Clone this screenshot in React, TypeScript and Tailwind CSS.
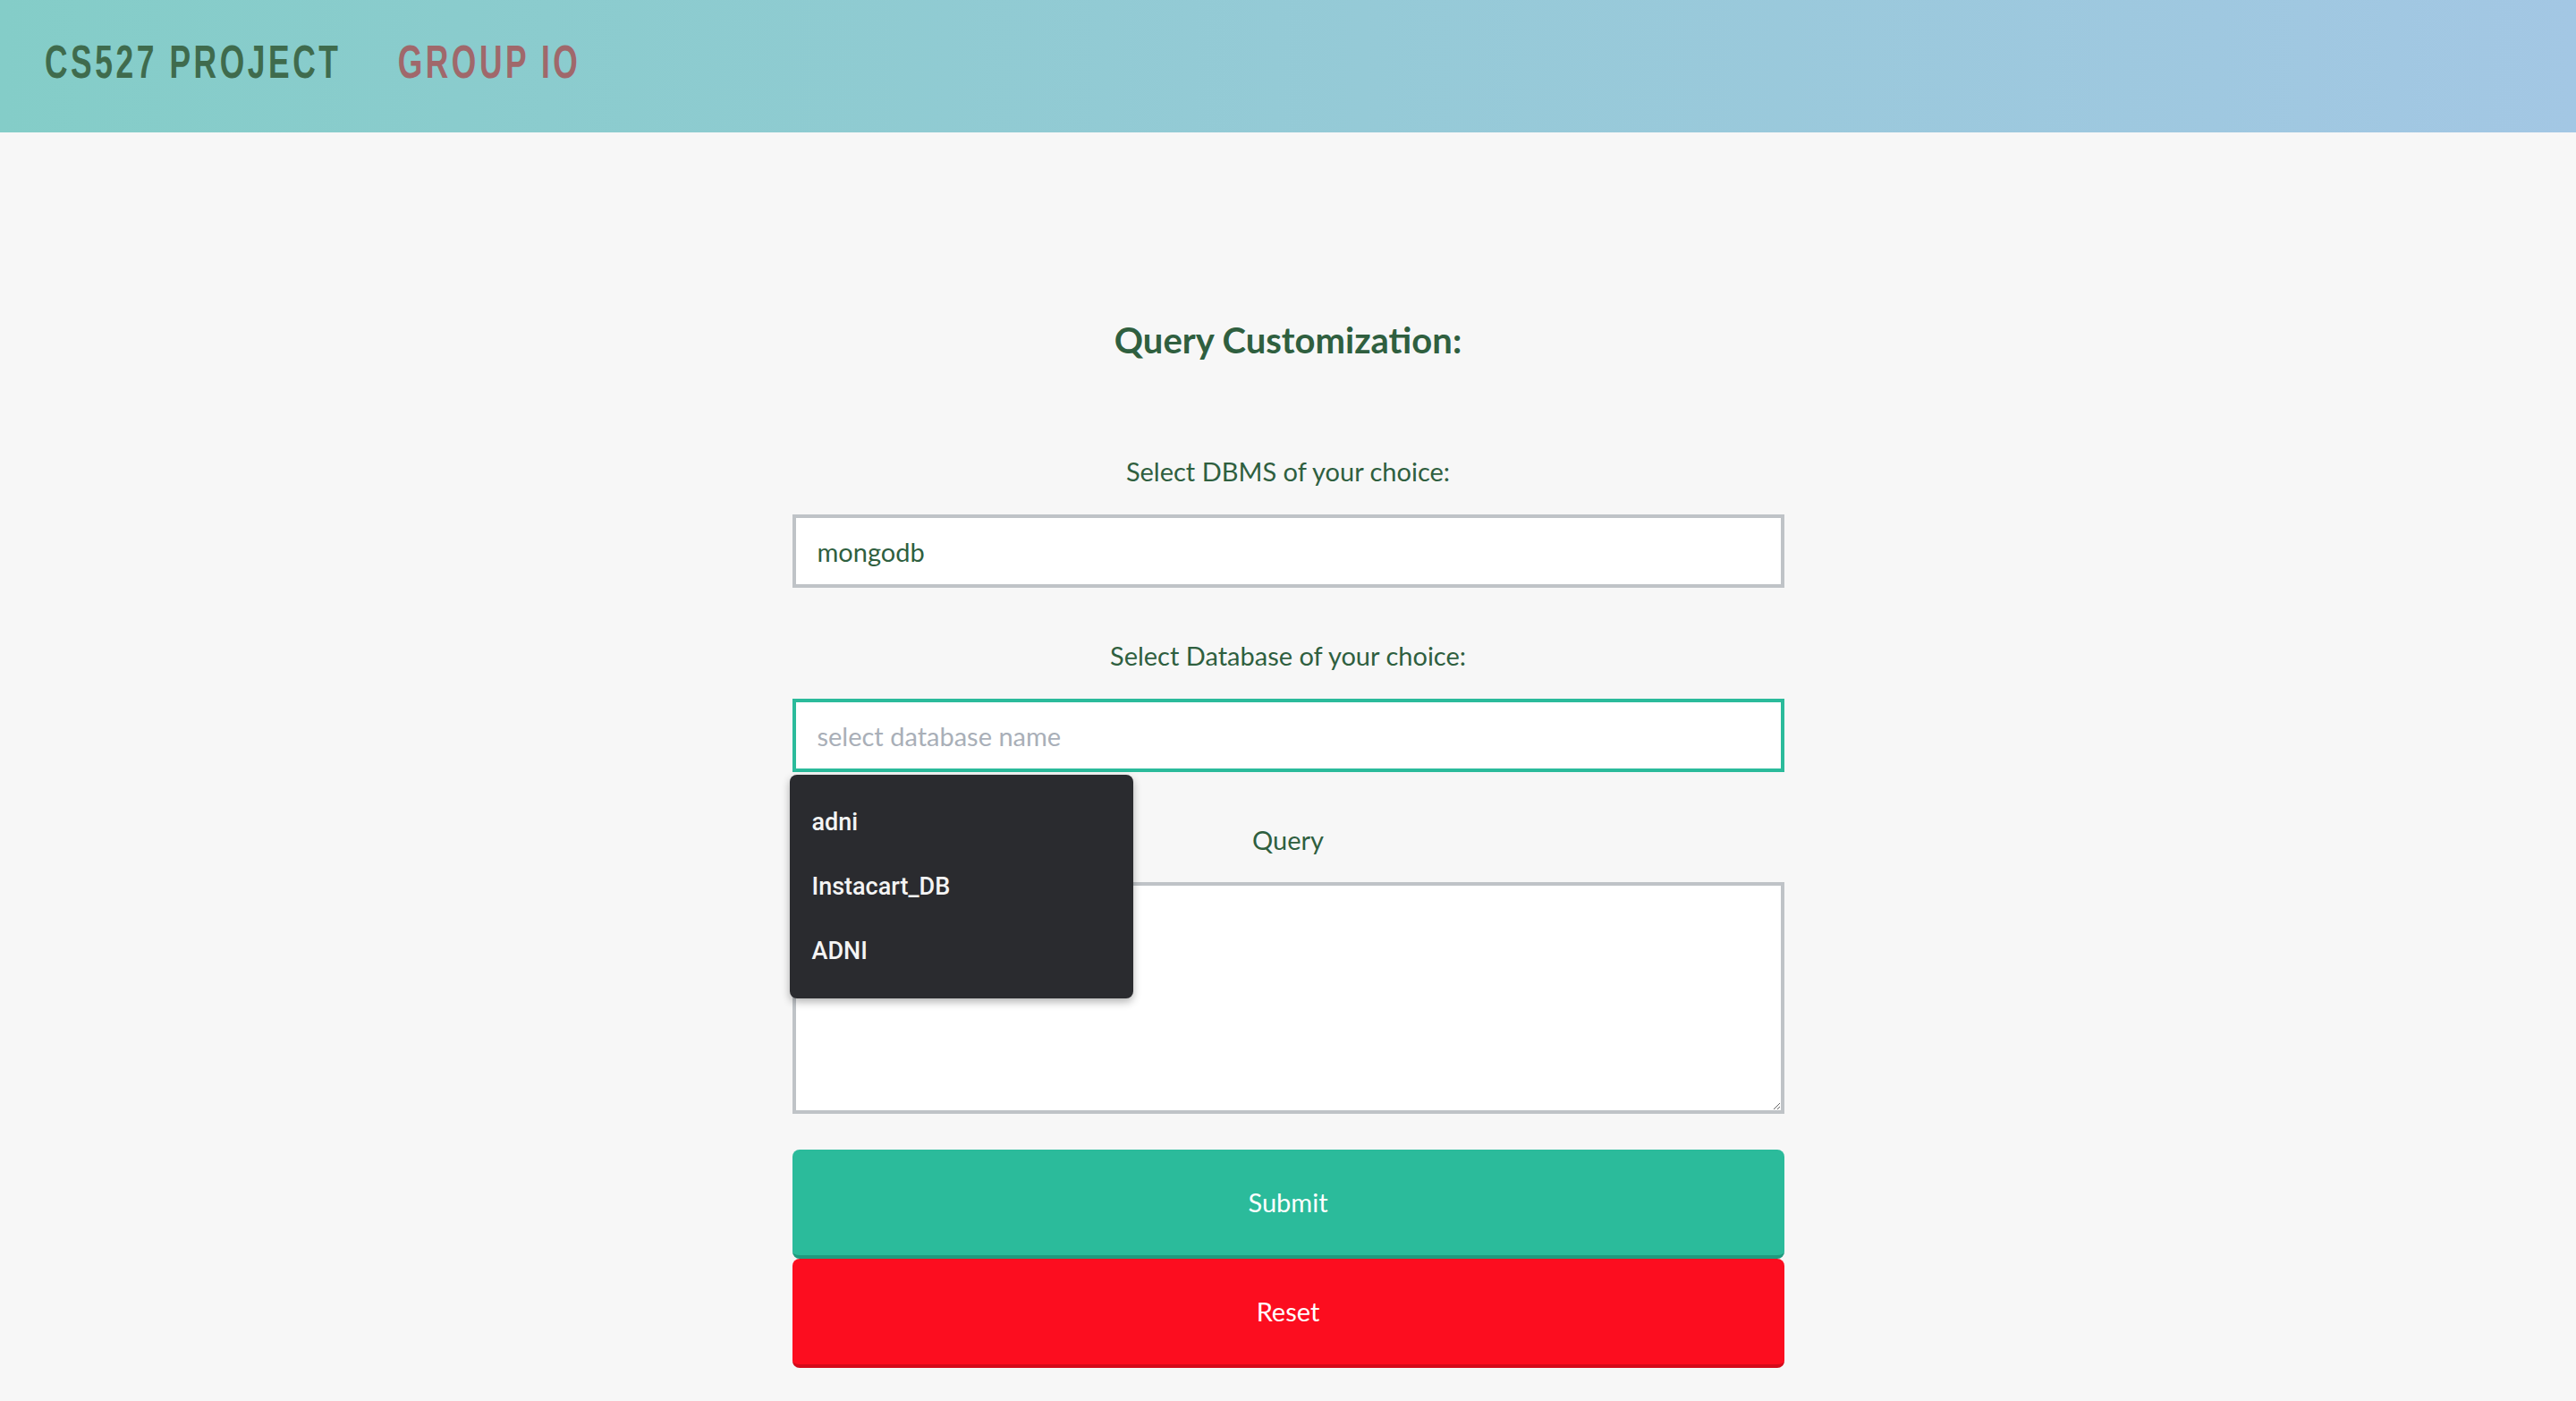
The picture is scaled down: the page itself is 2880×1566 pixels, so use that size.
import React, { useState } from "react";

const databases = ["adni", "Instacart_DB", "ADNI"];

const App = () => {
  const [dbms, setDbms] = useState("mongodb");
  const [dbName, setDbName] = useState("");
  const [query, setQuery] = useState("");
  const [open, setOpen] = useState(true);

  const handleReset = () => {
    setDbms("");
    setDbName("");
    setQuery("");
  };

  return (
    <div className="min-h-[1566px] bg-[#f7f7f7] font-['Lato','Open_Sans',sans-serif] text-[#2f5f3f]">
      {/* Header */}
      <header className="flex h-[148px] items-center bg-gradient-to-r from-[#84cdc8] to-[#a3c7e4] pl-[50px] pb-[10px]">
        {/* logo text is a condensed face, so squeeze it */}
        <div className="flex origin-left [transform:scale(0.77,1.12)] font-['Liberation_Sans','Arial',sans-serif] text-[46px] font-bold tracking-[0.1em] whitespace-nowrap">
          <span className="text-[#3f6b4d]">CS527 PROJECT</span>
          <span className="ml-[82px] text-[#a0686b]">GROUP IO</span>
        </div>
      </header>

      {/* Form */}
      <main className="mx-auto w-[1109px] pt-[208px]">
        <h2 className="text-center text-[40px] font-bold leading-[48px]">Query Customization:</h2>

        <label className="mt-[105px] block text-center text-[29px] leading-[36px]">
          Select DBMS of your choice:
        </label>
        <input
          value={dbms}
          onChange={(e) => setDbms(e.target.value)}
          className="mt-[30px] block h-[82px] w-full border-4 border-[#bfc3c7] bg-white px-[24px] text-[29px] text-[#2f5f3f] outline-none"
        />

        <label className="mt-[58px] block text-center text-[29px] leading-[36px]">
          Select Database of your choice:
        </label>
        <div className="relative mt-[30px]">
          <input
            value={dbName}
            placeholder="select database name"
            onFocus={() => setOpen(true)}
            onChange={(e) => setDbName(e.target.value)}
            className="block h-[82px] w-full border-4 border-[#2bbb9b] bg-white px-[24px] text-[29px] text-[#2f5f3f] outline-none placeholder:text-[#a9afb8]"
          />
          {open && (
            <ul className="absolute left-[-3px] top-[85px] z-10 w-[384px] rounded-[8px] bg-[#2a2b2f] py-[17px] font-['Roboto','Inter',sans-serif] text-[27px] font-medium text-[#f4f4f4] shadow-[0_4px_10px_rgba(0,0,0,0.3)]">
              {databases.map((db) => (
                <li
                  key={db}
                  onClick={() => {
                    setDbName(db);
                    setOpen(false);
                  }}
                  className="flex h-[72px] cursor-pointer items-center px-[25px]"
                >
                  {db}
                </li>
              ))}
            </ul>
          )}
        </div>

        <label className="mt-[58px] block text-center text-[29px] leading-[36px]">Query</label>
        <textarea
          value={query}
          onChange={(e) => setQuery(e.target.value)}
          className="mt-[29px] block h-[259px] w-full border-4 border-[#bfc3c7] bg-white px-[24px] py-[16px] text-[29px] text-[#2f5f3f] outline-none"
        />

        <button className="mt-[40px] block h-[122px] w-full rounded-[8px] border-b-[4px] border-[#1f9a7e] bg-[#2bbb9b] text-[29px] text-white">
          Submit
        </button>
        <button
          onClick={handleReset}
          className="block h-[122px] w-full rounded-[8px] border-b-[4px] border-[#d40a1a] bg-[#fc0d1f] text-[29px] text-white"
        >
          Reset
        </button>
      </main>
    </div>
  );
};

export default App;
